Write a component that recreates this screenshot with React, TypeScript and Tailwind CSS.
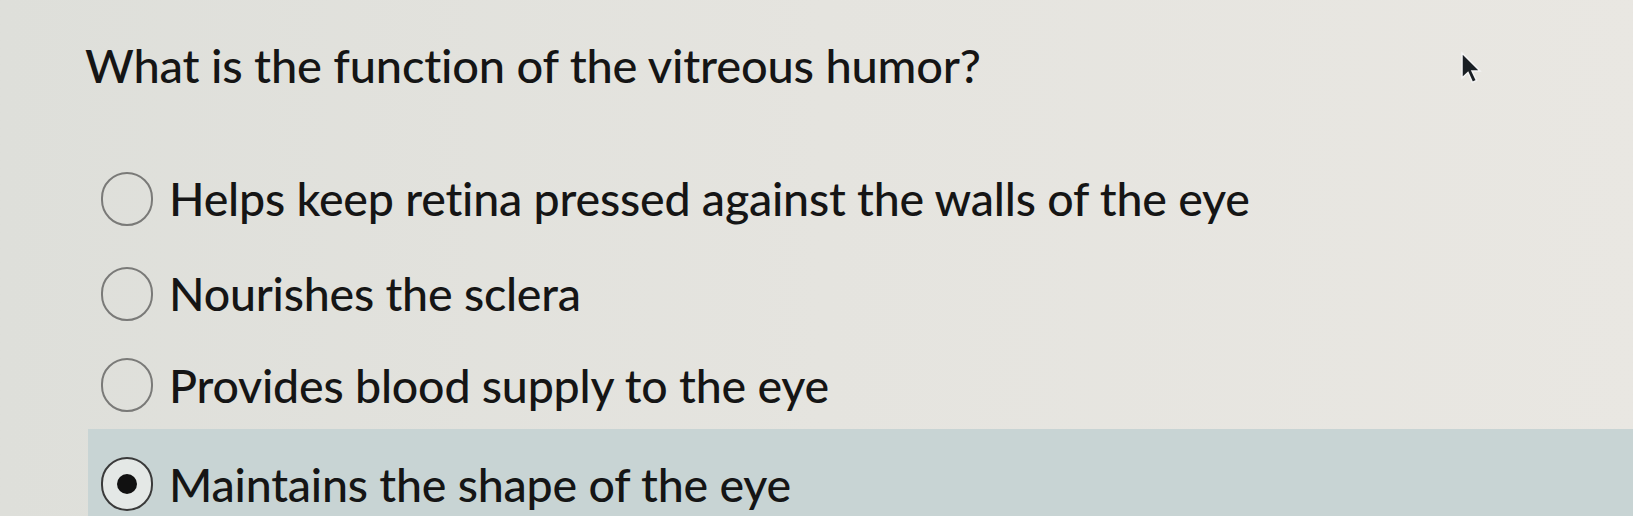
import React from 'react';

const options = [
  { label: 'Helps keep retina pressed against the walls of the eye', h: 'h-[95px]' },
  { label: 'Nourishes the sclera', h: 'h-[95px]' },
  { label: 'Provides blood supply to the eye', h: 'h-[88px]' },
  { label: 'Maintains the shape of the eye', h: 'h-[110px]', selected: true },
];

function Radio({ checked }: { checked?: boolean }) {
  return (
    <span
      className={
        'flex items-center justify-center w-[52px] h-[54px] rounded-full border-2 shrink-0 ' +
        (checked ? 'border-[#3a3a3a] bg-[#e4e8e6]' : 'border-[#7a7a78]')
      }
    >
      {checked && <span className="w-[20px] h-[20px] rounded-full bg-[#111]" />}
    </span>
  );
}

export default function App() {
  return (
    <div className="relative w-[1633px] h-[516px] overflow-hidden bg-gradient-to-r from-[#dedfda] via-[#e5e4df] to-[#e9e7e2] text-[#151515] font-['Lato','Liberation_Sans',sans-serif]">
      <div className="pl-[85px] pt-[36px] h-[151px]">
        <h1 className="text-[47px] leading-[58px] font-medium tracking-[-0.2px]">
          What is the function of the vitreous humor?
        </h1>
      </div>

      <div className="flex flex-col">
        {options.map(o => (
          <div
            key={o.label}
            className={
              'flex items-center gap-[16px] ' +
              o.h +
              (o.selected ? ' ml-[88px] pl-[13px] bg-[#c8d4d4]' : ' pl-[101px]')
            }
          >
            <Radio checked={o.selected} />
            <span className="text-[46.5px] leading-none font-medium tracking-[-0.2px]">{o.label}</span>
          </div>
        ))}
      </div>

      {/* mouse pointer */}
      <svg className="absolute left-[1459px] top-[51px]" width="26" height="38" viewBox="0 0 26 38">
        <path d="M3 2 L3 27 L9 21.5 L13.5 31.5 L17.5 29.5 L13 20 L21 20 Z" fill="#1a1f24" stroke="#f4f4f4" strokeWidth="1.5" />
      </svg>
    </div>
  );
}
